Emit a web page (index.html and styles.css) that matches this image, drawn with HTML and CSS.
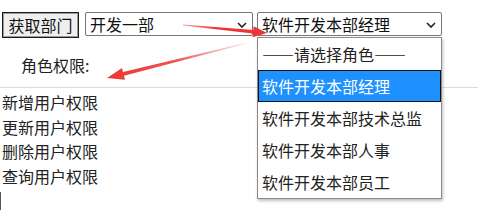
FILE: index.html
```html
<!DOCTYPE html>
<html lang="zh-CN">
<head>
  <meta charset="UTF-8">
  <title>角色权限</title>
  <link rel="stylesheet" href="styles.css">
</head>
<body>
  <div class="toolbar">
    <button class="btn-get">获取部门</button>
    <div class="select-box dept">
      <select>
        <option>开发一部</option>
      </select>
      <svg class="chevron" width="10" height="6" viewBox="0 0 10 6"><path d="M1 1 L5 5 L9 1" fill="none" stroke="#222" stroke-width="1.6"/></svg>
    </div>
    <div class="select-box role">
      <select>
        <option>软件开发本部经理</option>
      </select>
      <svg class="chevron" width="10" height="6" viewBox="0 0 10 6"><path d="M1 1 L5 5 L9 1" fill="none" stroke="#222" stroke-width="1.6"/></svg>
    </div>
  </div>

  <div class="label">角色权限:</div>
  <hr class="divider">

  <ul class="perm-list">
    <li>新增用户权限</li>
    <li>更新用户权限</li>
    <li>删除用户权限</li>
    <li>查询用户权限</li>
  </ul>
  <div class="edge"></div>

  <!-- 下拉框展开的列表 -->
  <div class="dropdown">
    <div class="opt">——请选择角色——</div>
    <div class="opt active">软件开发本部经理</div>
    <div class="opt">软件开发本部技术总监</div>
    <div class="opt">软件开发本部人事</div>
    <div class="opt">软件开发本部员工</div>
  </div>

  <!-- 标注箭头 -->
  <svg class="arrows" width="478" height="213" viewBox="0 0 478 213">
    <defs>
      <linearGradient id="g1" gradientUnits="userSpaceOnUse" x1="183" y1="25" x2="267" y2="33">
        <stop offset="0" stop-color="#f04040" stop-opacity="0.5"/>
        <stop offset="0.4" stop-color="#ee3535"/>
        <stop offset="1" stop-color="#ee3535"/>
      </linearGradient>
      <linearGradient id="g2" gradientUnits="userSpaceOnUse" x1="247" y1="43" x2="107" y2="78">
        <stop offset="0" stop-color="#f06060" stop-opacity="0.15"/>
        <stop offset="0.5" stop-color="#ee3535" stop-opacity="0.85"/>
        <stop offset="1" stop-color="#ee3535"/>
      </linearGradient>
    </defs>
    <polygon fill="url(#g1)" points="183,24.5 253.3,30 253.6,26.2 267,33 252.6,37.2 252.9,33.4 183,25.5"/>
    <polygon fill="url(#g2)" points="247,42.5 123,71.9 122,68.1 107,78 125,79.7 124,75.8 247,43.5"/>
  </svg>
</body>
</html>
```

FILE: styles.css
```css
body {
  margin: 0;
  font-family: 'Noto Sans CJK SC', 'Noto Sans', sans-serif;
  font-size: 16px;
  color: #222;
  background: #fff;
  position: relative;
  height: 213px;
  overflow: hidden;
}

.toolbar {
  display: flex;
  align-items: flex-start;
  padding: 12px 0 0 2px;
}

.btn-get {
  width: 77px;
  height: 26px;
  padding: 0;
  font-family: inherit;
  font-size: 16px;
  line-height: 22px;
  color: #111;
  background: #efefef;
  border: 1px solid #1a1a1a;
  box-shadow: inset 0 0 0 1px #9a9a9a;
  border-radius: 0;
}

.select-box {
  position: relative;
  height: 24px;
}

.select-box.dept {
  width: 168px;
  margin-left: 6px;
}

.select-box.role {
  width: 185px;
  margin-left: 4px;
}

.select-box select {
  -webkit-appearance: none;
  appearance: none;
  width: 100%;
  height: 24px;
  padding: 0 0 0 4px;
  font-family: inherit;
  font-size: 16px;
  line-height: 22px;
  color: #111;
  background: #fff;
  border: 1px solid #767676;
  border-radius: 2px;
  outline: none;
}

.chevron {
  position: absolute;
  right: 6px;
  top: 10px;
}

.label {
  margin-top: 15px;
  padding-left: 21px;
  line-height: 24px;
}

.divider {
  margin: 10px 0 2px;
  border: none;
  border-top: 1px solid #dcdcdc;
  height: 0;
}

.perm-list {
  list-style: none;
  margin: 0;
  padding: 0 0 0 2px;
  line-height: 24.6px;
}

.edge {
  margin-top: 4px;
  height: 18px;
  border-left: 1px solid #555;
}

.dropdown {
  position: absolute;
  left: 257px;
  top: 37px;
  width: 183px;
  background: #fff;
  border: 1px solid #8a8a8a;
  box-shadow: 1px 2px 3px rgba(0, 0, 0, 0.25);
}

.opt {
  height: 32px;
  line-height: 32px;
  padding-left: 4px;
  color: #222;
  white-space: nowrap;
}

.opt.active {
  color: #fff;
  background: #1e90ff;
  outline: 1px solid #111;
  outline-offset: -1px;
}

.arrows {
  position: absolute;
  left: 0;
  top: 0;
  pointer-events: none;
}
```
